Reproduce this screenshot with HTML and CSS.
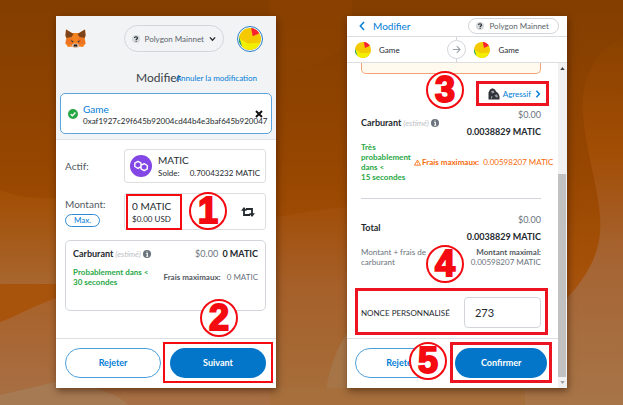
FILE: index.html
```html
<!DOCTYPE html>
<html lang="fr">
<head>
<meta charset="utf-8">
<title>Modifier la transaction</title>
<link rel="stylesheet" href="styles.css">
</head>
<body>
<svg class="backdrop" viewBox="0 0 623 405" preserveAspectRatio="none" aria-hidden="true">
  <defs>
    <linearGradient id="wave-left" gradientUnits="userSpaceOnUse" x1="0" y1="190" x2="0" y2="285"><stop offset="0" stop-color="#a24e03"/><stop offset="1" stop-color="#a8662f"/></linearGradient>
    <linearGradient id="wave-low" gradientUnits="userSpaceOnUse" x1="0" y1="300" x2="0" y2="405"><stop offset="0" stop-color="#a9622a"/><stop offset="1" stop-color="#a77046"/></linearGradient>
    <linearGradient id="wave-mid" gradientUnits="userSpaceOnUse" x1="0" y1="210" x2="0" y2="405"><stop offset="0" stop-color="#a14f0a"/><stop offset=".4" stop-color="#a6602a"/><stop offset="1" stop-color="#a66f3c"/></linearGradient>
    <linearGradient id="wave-right" gradientUnits="userSpaceOnUse" x1="0" y1="40" x2="0" y2="405"><stop offset="0" stop-color="#8a4200"/><stop offset=".3" stop-color="#a24d04"/><stop offset=".6" stop-color="#a66433"/><stop offset="1" stop-color="#a77548"/></linearGradient>
  </defs>
  <path d="M270 73C300 75 325 62 352 42V0H270Z" fill="#8e4300" opacity=".6"/>
  <path d="M0 190C20 198 40 199 60 198V284H0Z" fill="url(#wave-left)"/>
  <path d="M0 284C20 286 40 286 60 283V405H0Z" fill="#a9540d"/>
  <path d="M0 322C20 315 36 304 60 297V388H276V405H0Z" fill="url(#wave-low)"/>
  <path d="M0 395L60 381C90 384 120 395 128 405H0Z" fill="#a67a52"/>
  <path d="M270 219C300 212 330 208 352 207V405H270Z" fill="url(#wave-mid)"/>
  <path d="M352 325C335 350 326 375 325 405H352Z" fill="#a57548"/>
  <path d="M270 388H567V405H270Z" fill="#a66f3c"/>
  <path d="M623 38C595 50 580 80 583 115C587 160 603 200 600 232C598 262 580 285 560 306V388H525V405H623Z" fill="url(#wave-right)"/>
</svg>

<svg class="defs" aria-hidden="true">
  <symbol id="avatar" viewBox="0 0 20 20">
    <circle cx="10" cy="10" r="10" fill="#f4c900"/>
    <path d="M0 9L8 14L19 13.500A10 10 0 0 1 2 16A10 10 0 0 1 0 9Z" fill="#f3ef00"/>
    <path d="M0 8L3 17.200A10 10 0 0 1 0 8Z" fill="#1f9a80"/>
    <path d="M11 0.100A10 10 0 0 1 18.500 4.700L12.500 7.500Z" fill="#fb2130"/>
  </symbol>
  <symbol id="help" viewBox="0 0 10 10">
    <circle cx="5" cy="5" r="5" fill="#d3d8dd"/>
    <path d="M3.200 3.700C3.300 1.600 7 1.700 6.800 3.900C6.700 5 5.200 5 5.200 6.300M5.200 7.300V8.500" fill="none" stroke="#24292e" stroke-width="1.500"/>
  </symbol>
  <symbol id="info" viewBox="0 0 10 10">
    <circle cx="5" cy="5" r="5" fill="#6a737d"/>
    <path d="M4 4.300H5.400V7.700M3.900 7.800H6.600M5 1.800V3.200" fill="none" stroke="#fff" stroke-width="1.300"/>
  </symbol>
</svg>

<main class="screens">
  <section class="panel">
    <header class="top">
      <div class="brand-row">
        <svg class="fox" viewBox="0 0 42 38" role="img" aria-label="MetaMask">
          <path d="M2 1L14 8H28L40 1L41 13L39 22L41 29L36 36L27 35L24 37H18L15 35L6 36L1 29L3 22L1 13Z" fill="#f58220"/>
          <path d="M2 1L17 10L13 16L3 18L1 13Z" fill="#7d431a"/>
          <path d="M40 1L25 10L29 16L39 18L41 13Z" fill="#7d431a"/>
          <path d="M2 21L13 17L18 25L14 32L1 29Z" fill="#ee7320"/>
          <path d="M40 21L29 17L24 25L28 32L41 29Z" fill="#ee7320"/>
          <path d="M11 22L17 25L15 27ZM31 22L25 25L27 27Z" fill="#233447"/>
          <path d="M13 32L18 29H24L29 32L25 37H17Z" fill="#d7c1b3"/>
          <path d="M18 31H24L25 35H17Z" fill="#161616"/>
        </svg>
        <button class="network">
          <svg class="ico8"><use href="#help"/></svg>
          Polygon Mainnet
          <svg class="caret" viewBox="0 0 8 6"><path d="M1 1.200L4 4.500L7 1.200" fill="none" stroke="#24292e" stroke-width="1.500"/></svg>
        </button>
        <button class="account" aria-label="Compte"><svg><use href="#avatar"/></svg></button>
      </div>
      <div class="title-row">
        <h1>Modifier</h1>
        <a href="#">Annuler la modification</a>
      </div>
      <div class="recipient">
        <svg class="check" viewBox="0 0 10 10"><circle cx="5" cy="5" r="5" fill="#28a745"/><path d="M2.700 5.200L4.400 6.800L7.400 3.500" fill="none" stroke="#fff" stroke-width="1.300"/></svg>
        <div class="who"><strong>Game</strong><span>0xaf1927c29f645b92004cd44b4e3baf645b920047</span></div>
        <button class="clear" aria-label="Effacer"><svg viewBox="0 0 8 8"><path d="M1 1L7 7M7 1L1 7" stroke="#111" stroke-width="2"/></svg></button>
      </div>
    </header>

    <div class="form">
      <span class="label">Actif:</span>
      <button class="asset">
        <svg class="coin" viewBox="0 0 22 22"><circle cx="11" cy="11" r="11" fill="#8247e5"/><path d="M11 11.600L8 13.300L4.800 11.500V8.100L8 6.300L11 8.100V13.900L14.200 15.700L17.300 13.900V10.500L14.200 8.700L11 10.400" fill="none" stroke="#fff" stroke-width="1.400" stroke-linejoin="round"/></svg>
        <span class="asset-text"><span class="asset-name">MATIC</span><span class="balance"><span>Solde:</span><span>0.70043232 MATIC</span></span></span>
      </button>
      <div class="label">
        <label for="amount">Montant:</label>
        <button class="max">Max.</button>
      </div>
      <div class="amount">
        <div class="amount-value">
          <input id="amount" value="0 MATIC">
          <span>$0.00 USD</span>
          <i class="mark"></i>
        </div>
        <b class="step step-1">1</b>
        <button class="swap" aria-label="Changer de devise"><svg viewBox="0 0 14 10"><path d="M3 2V8H9M5 2H11V8" fill="none" stroke="#24292e" stroke-width="1.800"/><path d="M0 3.800L3 0L6 3.800ZM8 6.200L11 10L14 6.200Z" fill="#24292e"/></svg></button>
      </div>
    </div>

    <div class="fees">
      <div class="line">
        <span class="gas"><b>Carburant</b> <em>(estimé)</em> <svg class="ico8"><use href="#info"/></svg></span>
        <span class="cost"><span>$0.00</span> <b>0 MATIC</b></span>
      </div>
      <div class="line">
        <span class="timing">Probablement dans &lt; 30 secondes</span>
        <span class="ceiling"><b>Frais maximaux:</b> <span>0 MATIC</span></span>
      </div>
      <b class="step step-2">2</b>
    </div>

    <footer class="actions">
      <button class="outline">Rejeter</button>
      <div class="marked"><button class="solid">Suivant</button><i class="mark"></i></div>
    </footer>
  </section>

  <section class="panel">
    <header class="bar">
      <a class="back" href="#"><svg viewBox="0 0 6 10"><path d="M5 1L1.300 5L5 9" fill="none" stroke="#037dd6" stroke-width="1.500"/></svg>Modifier</a>
      <span class="network small"><svg class="ico8"><use href="#help"/></svg>Polygon Mainnet</span>
    </header>
    <div class="route">
      <span class="party"><svg class="face"><use href="#avatar"/></svg>Game</span>
      <span class="arrow"><svg viewBox="0 0 10 10"><path d="M1 5H9M5.300 1.300L9 5L5.300 8.700" fill="none" stroke="#9aa1a8" stroke-width="1.200"/></svg></span>
      <span class="party"><svg class="face"><use href="#avatar"/></svg>Game</span>
    </div>
    <div class="scroller">
      <div class="scroll-body">
        <div class="content">
          <div class="warning"></div>
          <div class="speed-row">
            <b class="step step-3">3</b>
            <button class="speed">
              <svg class="gorilla" viewBox="0 0 12 12"><path d="M.5 11.500V4.500L2 1.500L4.500 .3L7 1.500L8 3.500L10 5L11.500 8V11.500Z" fill="#30343a"/><path d="M3 3L5.500 2.500L6.500 4.500L4 5.500ZM6.500 7L9 6.500L10 9L8 9.500ZM3 8.500L4.500 8L4 10.500H3Z" fill="#9a9fa5"/></svg>
              Agressif
              <svg class="next" viewBox="0 0 6 10"><path d="M1 1L4.700 5L1 9" fill="none" stroke="#037dd6" stroke-width="1.800"/></svg>
              <i class="mark"></i>
            </button>
          </div>
          <div class="summary">
            <span class="gas"><b>Carburant</b> <em>(estimé)</em> <svg class="ico8"><use href="#info"/></svg></span>
            <span class="sum"><span>$0.00</span><b>0.0038829 MATIC</b></span>
          </div>
          <div class="estimate">
            <span class="timing">Très probablement dans &lt; <br>15 secondes</span>
            <span class="ceiling alert"><b><svg viewBox="0 0 10 9"><path d="M5 1L9.300 8.300H.7Z" fill="none" stroke="#f66a0a" stroke-width="1.200"/><path d="M5 3.500V5.800M5 6.400V7.500" stroke="#f66a0a"/></svg> Frais maximaux:</b> <span>0.00598207 MATIC</span></span>
          </div>
          <hr>
          <div class="summary total">
            <b>Total</b>
            <span class="sum"><span>$0.00</span><b>0.0038829 MATIC</b></span>
          </div>
          <div class="detail">
            <span>Montant + frais de carburant</span>
            <span class="right"><b>Montant maximal:</b><br>0.00598207 MATIC</span>
            <b class="step step-4">4</b>
          </div>
          <div class="nonce">
            <label for="nonce">NONCE PERSONNALISÉ</label>
            <input id="nonce" value="273">
            <i class="mark"></i>
          </div>
        </div>
        <footer class="actions">
          <button class="outline">Rejeter</button>
          <div class="marked"><button class="solid">Confirmer</button><i class="mark"></i></div>
          <b class="step step-5">5</b>
        </footer>
      </div>
      <div class="scrollbar" aria-hidden="true">
        <svg viewBox="0 0 6 4"><path d="M0 4L3 0L6 4Z" fill="#404040"/></svg>
        <i class="thumb"></i>
        <svg viewBox="0 0 6 4"><path d="M0 0L3 4L6 0Z" fill="#a0a0a0"/></svg>
      </div>
    </div>
  </section>
</main>
</body>
</html>
```
FILE: styles.css
```css
* { box-sizing: border-box; }

body {
  margin: 0;
  min-height: 100vh;
  background: linear-gradient(#833e00, #964600 40%, #a55008 65%, #a9622a);
  font: 8px/10px Lato, "Noto Sans", sans-serif;
  color: #24292e;
}

button, input { font: inherit; color: inherit; padding: 0; margin: 0; border: 0; background: none; }
a { color: #037dd6; text-decoration: none; }
svg { display: block; flex: none; }

.backdrop { position: absolute; inset: 0; width: 100%; height: 100%; }
.defs { position: absolute; width: 0; height: 0; }

.screens {
  position: relative;
  display: grid;
  grid-template-columns: 1fr 1fr;
  gap: 71px;
  min-height: 100vh;
  padding: 16px 9% 17px;
}

.panel {
  display: flex;
  flex-direction: column;
  min-width: 0;
  background: #fff;
  box-shadow: 1px 3px 7px rgba(50, 20, 0, .55);
}

.ico8 { width: 8px; height: 8px; }

/* Send screen */
.top { padding: 9px 4px 5px; background: #f2f3f5; border-bottom: 1px solid #e0e3e6; }
.brand-row { display: flex; align-items: center; padding: 0 9px 0 5px; }
.fox { width: 21px; height: 19px; margin-right: auto; }

.network {
  display: flex;
  align-items: center;
  gap: 5px;
  height: 27px;
  padding: 0 7px;
  border: 1px solid #d2d6da;
  border-radius: 14px;
  color: #5b636b;
}
.network .caret { width: 7px; height: 6px; }

.account { width: 26px; height: 26px; margin-left: 13px; padding: 1px; border: 1px solid #2a83cb; border-radius: 50%; }
.account svg { width: 22px; height: 22px; }

.title-row { display: grid; grid-template-columns: minmax(0, 1fr) 60px minmax(0, 1fr); align-items: center; height: 41px; padding-top: 11px; }
.title-row h1 { grid-column: 2; margin: 0; font-size: 12px; line-height: 14px; font-weight: 400; color: #3c4248; }
.title-row a { justify-self: end; padding-right: 15px; white-space: nowrap; }

.recipient {
  display: flex;
  align-items: center;
  height: 41px;
  padding: 0 8px 0 7px;
  border: 1px solid #5ba5de;
  border-radius: 5px;
  background: #fff;
}
.check { width: 10px; height: 10px; margin-right: 5px; }
.who { flex: 1; min-width: 0; white-space: nowrap; }
.who strong { display: block; font-size: 10px; line-height: 14px; font-weight: 400; color: #037dd6; }
.clear { margin-left: -8px; }
.clear svg { width: 8px; height: 8px; }

.form { display: grid; grid-template-columns: 50px 1fr; gap: 10px 9px; align-items: center; padding: 9px 10px 0 9px; }
.label { font-size: 10px; line-height: 14px; color: #535a61; }
.max {
  display: block;
  width: 35px;
  height: 13px;
  margin-top: 3px;
  border: 1px solid #2f8bd2;
  border-radius: 7px;
  font-size: 8px;
  line-height: 10px;
  color: #037dd6;
}

.asset { display: flex; align-items: center; gap: 6px; height: 34px; padding: 0 5px; border: 1px solid #dcdfe2; border-radius: 3px; text-align: left; }
.coin { width: 22px; height: 22px; }
.asset-text { flex: 1; }
.asset-name { display: block; font-size: 10px; line-height: 14px; }
.balance { display: flex; justify-content: space-between; line-height: 12px; white-space: nowrap; }

.amount { position: relative; display: flex; align-items: center; justify-content: space-between; height: 37px; padding: 0 10px 0 7px; border: 1px solid #dcdfe2; border-radius: 3px; }
.amount-value { position: relative; width: 45px; }
.amount-value input { display: block; width: 100%; height: 14px; font-size: 10px; }
.amount-value span { display: block; line-height: 12px; }
.swap svg { width: 14px; height: 10px; }

.fees { position: relative; height: 71px; margin: 10px 10px 0 9px; padding: 8px 7px; border: 1px solid #d2d6da; border-radius: 5px; }
.line { display: flex; align-items: center; justify-content: space-between; margin-bottom: 8px; }
.gas { display: flex; align-items: center; gap: 2px; }
.gas b { font-size: 9px; font-weight: 700; }
.gas em { color: #bbc0c5; }
.cost { font-size: 9px; }
.cost b { margin-left: 2px; }
.cost span, .ceiling span { color: #6a737d; }
.timing { width: 80px; font-weight: 700; color: #28a745; }
.ceiling { white-space: nowrap; color: #535a61; }
.ceiling span { margin-left: 4px; }

.actions { position: relative; display: grid; grid-template-columns: 1fr 1fr; gap: 9px; margin-top: auto; padding: 9px 10px 10px 9px; border-top: 1px solid #dcdfe2; }
.actions button { width: 100%; height: 30px; border-radius: 15px; font-size: 9px; font-weight: 700; }
.outline { border: 1px solid #4c9fdb; color: #037dd6; }
.actions .solid { background: #0376c9; color: #fff; }
.marked { position: relative; }

/* Confirmation screen */
.bar { display: flex; align-items: center; justify-content: space-between; height: 21px; padding: 0 8px 0 12px; border-bottom: 1px solid #dcdfe2; }
.back { display: flex; align-items: center; gap: 8px; font-size: 10px; }
.back svg { width: 6px; height: 10px; }
.network.small { height: 16px; gap: 6px; padding: 0 9px 0 7px; }

.route { display: grid; grid-template-columns: 1fr 19px 1fr; align-items: center; height: 26px; border-bottom: 1px solid #dcdfe2; }
.party { display: flex; align-items: center; gap: 8px; padding-left: 8px; }
.face { width: 16px; height: 16px; }
.arrow { position: relative; display: grid; place-items: center; height: 19px; border: 1px solid #d2d6da; border-radius: 50%; }
.arrow::before, .arrow::after { content: ""; position: absolute; left: 8px; width: 1px; height: 3px; background: #d2d6da; }
.arrow::before { top: -4px; }
.arrow::after { bottom: -4px; }
.arrow svg { width: 9px; height: 9px; }

.scroller { flex: 1; display: flex; }
.scroll-body { flex: 1; min-width: 0; display: flex; flex-direction: column; }
.scrollbar { display: flex; flex-direction: column; justify-content: space-between; align-items: center; width: 9px; padding: 4px 0; background: #f1f1f1; }
.scrollbar svg { width: 5px; height: 3px; }
.thumb { width: 8px; height: 64%; margin: auto 0 4px; background: #c1c1c1; }

.content { padding: 0 17px 0 14px; }
.warning { height: 11px; border: 1px solid #f2a274; border-top: 0; border-radius: 0 0 5px 5px; background: #fff9ee; }
.speed-row { position: relative; display: flex; justify-content: flex-end; height: 33px; padding-top: 13px; }
.speed { position: relative; display: flex; align-items: center; gap: 3px; height: 13px; color: #037dd6; }
.gorilla { width: 12px; height: 12px; }
.next { width: 6px; height: 8px; margin-left: 1px; }

.summary { display: flex; align-items: center; justify-content: space-between; height: 32px; }
.sum { text-align: right; font-size: 9px; }
.sum span { display: block; margin-bottom: 7px; color: #6a737d; }
.sum b { display: block; }
.estimate { display: flex; align-items: center; margin: 3px -17px 0 0; }
.estimate .timing { width: 53px; }
.alert { display: flex; color: #f66a0a; }
.alert b { display: flex; align-items: center; gap: 1px; }
.alert span { color: #f66a0a; }
.alert svg { width: 7px; height: 7px; }
hr { height: 1px; margin: 16px 0 13px; border: 0; background: #d2d6da; }
.total > b { font-size: 9px; }
.detail { position: relative; display: flex; justify-content: space-between; margin-top: 3px; color: #6a737d; }
.detail > span:first-child { width: 68px; }
.right { text-align: right; }
.right b { color: #535a61; }

.nonce { position: relative; display: flex; align-items: center; justify-content: space-between; margin-top: 30px; }
.nonce input { width: 77px; height: 31px; padding: 0 10px; border: 1px solid #d2d6da; border-radius: 4px; font-size: 11px; }
.scroll-body .actions { padding: 9px 11px 10px 8px; }

/* Tutorial highlights */
.mark { position: absolute; border: 3px solid #ec1420; }
.amount-value .mark { inset: -5px -5px -5px -6px; border-width: 2px; border-color: #f40b12; }
.marked .mark { inset: -6px -7px -5px; border-width: 2px; border-color: #f40b12; }
.speed .mark { inset: -6px -8px -6px -12px; }
.nonce .mark { inset: -9px -7px -7px -6px; }
.scroll-body .marked .mark { inset: -6px -5px -5px; border-width: 3px; border-color: #ec1420; }

.step {
  position: absolute;
  display: grid;
  place-items: center;
  width: 38px;
  height: 38px;
  border: 2px solid #f40b12;
  border-radius: 50%;
  background: #fff;
  color: #f40b12;
  font: 700 36px/34px "Liberation Sans", sans-serif;
  -webkit-text-stroke: 2px #f40b12;
}
.step-1 { top: -2px; left: 64px; }
.step-2 { top: 58px; left: 134px; }
.step-3 { top: -3px; left: 65px; }
.step-4 { top: -2px; left: 65px; }
.step-5 { top: 3px; left: 62px; }
```
